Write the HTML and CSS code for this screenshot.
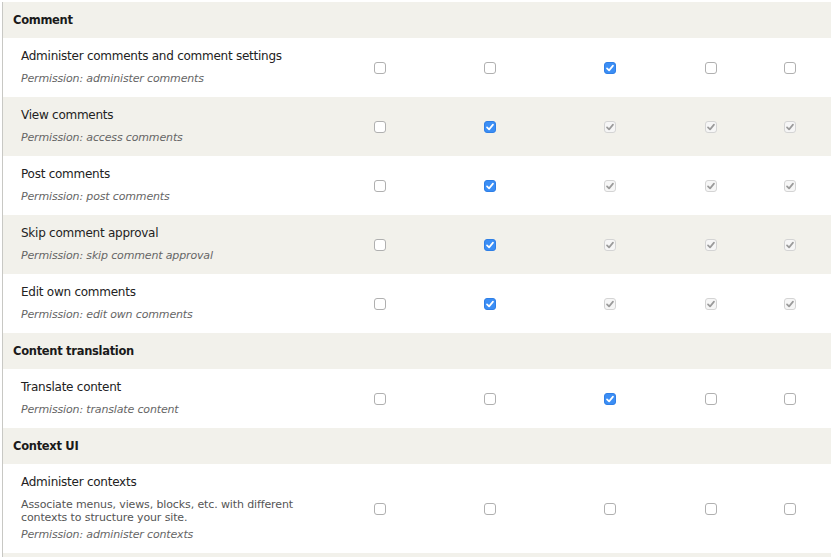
FILE: index.html
```html
<!DOCTYPE html>
<html>
<head>
<meta charset="utf-8">
<link rel="stylesheet" href="styles.css">
</head>
<body>
<div class="page">
  <div class="perm-table">
    <div class="row module"><div class="module-name">Comment</div></div>

    <div class="row odd">
      <div class="perm"><div class="title">Administer comments and comment settings</div><div class="machine">Permission: administer comments</div></div>
      <div class="cell"><span class="cb"></span></div>
      <div class="cell"><span class="cb"></span></div>
      <div class="cell"><span class="cb on"><svg viewBox="0 0 12 12"><path d="M3 6.3 5.1 8.4 9 3.6"/></svg></span></div>
      <div class="cell"><span class="cb"></span></div>
      <div class="cell"><span class="cb"></span></div>
    </div>

    <div class="row even">
      <div class="perm"><div class="title">View comments</div><div class="machine">Permission: access comments</div></div>
      <div class="cell"><span class="cb"></span></div>
      <div class="cell"><span class="cb on"><svg viewBox="0 0 12 12"><path d="M3 6.3 5.1 8.4 9 3.6"/></svg></span></div>
      <div class="cell"><span class="cb dis"><svg viewBox="0 0 12 12"><path d="M3 6.3 5.1 8.4 9 3.6"/></svg></span></div>
      <div class="cell"><span class="cb dis"><svg viewBox="0 0 12 12"><path d="M3 6.3 5.1 8.4 9 3.6"/></svg></span></div>
      <div class="cell"><span class="cb dis"><svg viewBox="0 0 12 12"><path d="M3 6.3 5.1 8.4 9 3.6"/></svg></span></div>
    </div>

    <div class="row odd">
      <div class="perm"><div class="title">Post comments</div><div class="machine">Permission: post comments</div></div>
      <div class="cell"><span class="cb"></span></div>
      <div class="cell"><span class="cb on"><svg viewBox="0 0 12 12"><path d="M3 6.3 5.1 8.4 9 3.6"/></svg></span></div>
      <div class="cell"><span class="cb dis"><svg viewBox="0 0 12 12"><path d="M3 6.3 5.1 8.4 9 3.6"/></svg></span></div>
      <div class="cell"><span class="cb dis"><svg viewBox="0 0 12 12"><path d="M3 6.3 5.1 8.4 9 3.6"/></svg></span></div>
      <div class="cell"><span class="cb dis"><svg viewBox="0 0 12 12"><path d="M3 6.3 5.1 8.4 9 3.6"/></svg></span></div>
    </div>

    <div class="row even">
      <div class="perm"><div class="title">Skip comment approval</div><div class="machine">Permission: skip comment approval</div></div>
      <div class="cell"><span class="cb"></span></div>
      <div class="cell"><span class="cb on"><svg viewBox="0 0 12 12"><path d="M3 6.3 5.1 8.4 9 3.6"/></svg></span></div>
      <div class="cell"><span class="cb dis"><svg viewBox="0 0 12 12"><path d="M3 6.3 5.1 8.4 9 3.6"/></svg></span></div>
      <div class="cell"><span class="cb dis"><svg viewBox="0 0 12 12"><path d="M3 6.3 5.1 8.4 9 3.6"/></svg></span></div>
      <div class="cell"><span class="cb dis"><svg viewBox="0 0 12 12"><path d="M3 6.3 5.1 8.4 9 3.6"/></svg></span></div>
    </div>

    <div class="row odd">
      <div class="perm"><div class="title">Edit own comments</div><div class="machine">Permission: edit own comments</div></div>
      <div class="cell"><span class="cb"></span></div>
      <div class="cell"><span class="cb on"><svg viewBox="0 0 12 12"><path d="M3 6.3 5.1 8.4 9 3.6"/></svg></span></div>
      <div class="cell"><span class="cb dis"><svg viewBox="0 0 12 12"><path d="M3 6.3 5.1 8.4 9 3.6"/></svg></span></div>
      <div class="cell"><span class="cb dis"><svg viewBox="0 0 12 12"><path d="M3 6.3 5.1 8.4 9 3.6"/></svg></span></div>
      <div class="cell"><span class="cb dis"><svg viewBox="0 0 12 12"><path d="M3 6.3 5.1 8.4 9 3.6"/></svg></span></div>
    </div>

    <div class="row module"><div class="module-name">Content translation</div></div>

    <div class="row odd">
      <div class="perm"><div class="title">Translate content</div><div class="machine">Permission: translate content</div></div>
      <div class="cell"><span class="cb"></span></div>
      <div class="cell"><span class="cb"></span></div>
      <div class="cell"><span class="cb on"><svg viewBox="0 0 12 12"><path d="M3 6.3 5.1 8.4 9 3.6"/></svg></span></div>
      <div class="cell"><span class="cb"></span></div>
      <div class="cell"><span class="cb"></span></div>
    </div>

    <div class="row module"><div class="module-name">Context UI</div></div>

    <div class="row odd">
      <div class="perm"><div class="title">Administer contexts</div><div class="desc">Associate menus, views, blocks, etc. with different contexts to structure your site.</div><div class="machine">Permission: administer contexts</div></div>
      <div class="cell"><span class="cb"></span></div>
      <div class="cell"><span class="cb"></span></div>
      <div class="cell"><span class="cb"></span></div>
      <div class="cell"><span class="cb"></span></div>
      <div class="cell"><span class="cb"></span></div>
    </div>

    <div class="row module"><div class="module-name">&nbsp;</div></div>
  </div>
</div>
</body>
</html>
```

FILE: styles.css
```css
html, body {
  margin: 0;
  padding: 0;
  background: #fff;
  overflow: hidden;
}
body {
  font-family: "DejaVu Sans", "Lucida Grande", Verdana, sans-serif;
  color: #222;
}
.page {
  padding: 2px 0 0 2px;
  width: 833px;
}
.perm-table {
  border-left: 1px solid #c8c8c4;
  width: 831px;
}
.row {
  display: grid;
  grid-template-columns: 322px 110px 110px 130px 72px 86px;
  align-items: center;
}
.row.module {
  display: block;
  background: #f2f1eb;
  height: 36px;
}
.module-name {
  font-weight: bold;
  font-size: 11.5px;
  letter-spacing: -0.3px;
  line-height: 36px;
  padding-left: 10px;
  color: #1a1a1a;
}
.row.odd { background: #fff; }
.row.even { background: #f2f1eb; }
.perm {
  padding: 10px 10px 11px 18px;
}
.title {
  font-size: 12px;
  line-height: 17px;
  letter-spacing: -0.25px;
  color: #222;
}
.machine {
  font-size: 11px;
  line-height: 14px;
  letter-spacing: -0.15px;
  font-style: italic;
  color: #666;
  margin-top: 7px;
}
.desc {
  font-size: 11px;
  line-height: 13px;
  letter-spacing: -0.12px;
  color: #555;
  margin-top: 7px;
  margin-bottom: -3px;
  width: 290px;
}
.cell {
  display: flex;
  justify-content: center;
  align-items: center;
}
.cb {
  box-sizing: border-box;
  width: 12px;
  height: 12px;
  border: 1px solid #b0b0b0;
  border-radius: 3px;
  background: #fff;
  display: flex;
  align-items: center;
  justify-content: center;
}
.cb svg {
  width: 12px;
  height: 12px;
  flex: none;
}
.cb svg path {
  fill: none;
  stroke-width: 1.7;
  stroke-linecap: round;
  stroke-linejoin: round;
}
.cb.on {
  background: #3b8ef5;
  border-color: #2f7fe6;
}
.cb.on path { stroke: #fff; }
.cb.dis {
  border-color: #d4d4d4;
  background: #f6f6f6;
}
.cb.dis path { stroke: #9a9a9a; }
```
